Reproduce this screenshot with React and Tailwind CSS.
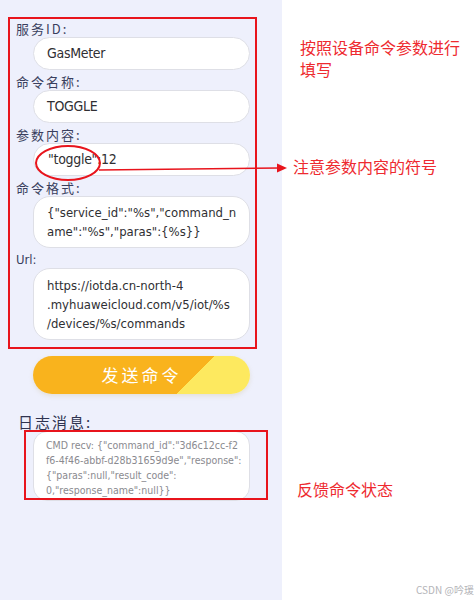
import React from "react";

const cjk = { fontFamily: '"Noto Sans CJK SC", "Noto Sans", sans-serif' };
const narrow = {
  fontFamily: '"DejaVu Sans Condensed", "DejaVu Sans", "Noto Sans CJK SC", sans-serif',
};

const Label = ({ children, latin }) => (
  <div
    className={`h-[20px] pt-[4px] pl-[16px] text-[13px] leading-[16px] text-[#3a3f5e] ${
      latin ? "" : "tracking-[2px]"
    }`}
    style={latin ? narrow : cjk}
  >
    {children}
  </div>
);

const Field = ({ children, tall }) => (
  <div
    className={`ml-[33px] w-[217px] bg-white border border-[#dedfe6] rounded-[17px] pl-[13px] pr-[4px] text-[#2f2f33] ${
      tall ? "py-[6px] text-[13px] leading-[19px]" : "h-[33px] flex items-center text-[14px] tracking-[-0.3px]"
    }`}
    style={narrow}
  >
    {children}
  </div>
);

export default function App() {
  return (
    <div className="relative w-[474px] h-[600px] bg-white overflow-hidden flex">
      {/* phone panel */}
      <div className="w-[282px] h-full bg-[#eef0fc] pt-[17px]">
        <Label>服务ID:</Label>
        <Field>GasMeter</Field>
        <Label>命令名称:</Label>
        <Field>TOGGLE</Field>
        <Label>参数内容:</Label>
        <Field>
          <span className="pl-[1px]">"toggle":12</span>
        </Field>
        <Label>命令格式:</Label>
        <Field tall>
          <div className="whitespace-nowrap">{'{"service_id":"%s","command_n'}</div>
          <div className="whitespace-nowrap">{'ame":"%s","paras":{%s}}'}</div>
        </Field>
        <Label latin>Url:</Label>
        <Field tall>
          <div className="pt-[1px] whitespace-nowrap">https://iotda.cn-north-4</div>
          <div className="whitespace-nowrap">.myhuaweicloud.com/v5/iot/%s</div>
          <div className="whitespace-nowrap">/devices/%s/commands</div>
        </Field>

        <button
          type="button"
          className="mt-[16px] ml-[33px] w-[217px] h-[38px] rounded-full text-white text-[17px] tracking-[3px] shadow-[0_2px_4px_rgba(200,180,120,0.25)]"
          style={{
            ...cjk,
            background: "linear-gradient(135deg, #f9b31d 0%, #f9b31d 71%, #fde95f 71%, #fde95f 100%)",
          }}
        >
          发送命令
        </button>

        <div
          className="pt-[19px] pl-[18px] h-[37px] text-[15px] leading-[17px] text-[#2f3350] tracking-[2px]"
          style={cjk}
        >
          日志消息:
        </div>
        <div
          className="ml-[33px] w-[217px] h-[70px] bg-white border border-[#dedfe6] rounded-[14px] pl-[12px] pt-[6px] text-[10.5px] leading-[15px] text-[#8a8a8f]"
          style={narrow}
        >
          <div className="whitespace-nowrap">{'CMD recv: {"command_id":"3d6c12cc-f2'}</div>
          <div className="whitespace-nowrap">{'f6-4f46-abbf-d28b31659d9e","response":'}</div>
          <div className="whitespace-nowrap">{'{"paras":null,"result_code":'}</div>
          <div className="whitespace-nowrap">{'0,"response_name":null}}'}</div>
        </div>
      </div>

      {/* annotations */}
      <div className="absolute left-[8px] top-[17px] w-[249px] h-[332px] border-2 border-[#e8141c]" />
      <div className="absolute left-[24px] top-[430px] w-[244px] h-[70px] border-2 border-[#e8141c]" />
      <div className="absolute left-[35px] top-[145px] w-[66px] h-[36px] rounded-[50%] border-2 border-[#e8141c]" />
      <svg className="absolute left-0 top-0" width="474" height="600">
        <line x1="99" y1="170" x2="280" y2="168" stroke="#e8141c" strokeWidth="1.6" />
        <polygon points="287,168 277,163.5 277,172.5" fill="#e8141c" />
      </svg>

      <div
        className="absolute left-[300px] top-[36px] w-[172px] text-[16px] leading-[22px] text-[#ee2a2f]"
        style={cjk}
      >
        <div className="whitespace-nowrap">按照设备命令参数进行</div>
        <div>填写</div>
      </div>
      <div
        className="absolute left-[293px] top-[156px] whitespace-nowrap text-[16px] leading-[21px] text-[#ee2a2f]"
        style={cjk}
      >
        注意参数内容的符号
      </div>
      <div
        className="absolute left-[297px] top-[479px] whitespace-nowrap text-[16px] leading-[21px] text-[#ee2a2f]"
        style={cjk}
      >
        反馈命令状态
      </div>
      <div
        className="absolute left-[416px] top-[583px] whitespace-nowrap text-[10px] leading-[14px] text-[#b4b4b8]"
        style={cjk}
      >
        CSDN @吟瑗
      </div>
    </div>
  );
}
